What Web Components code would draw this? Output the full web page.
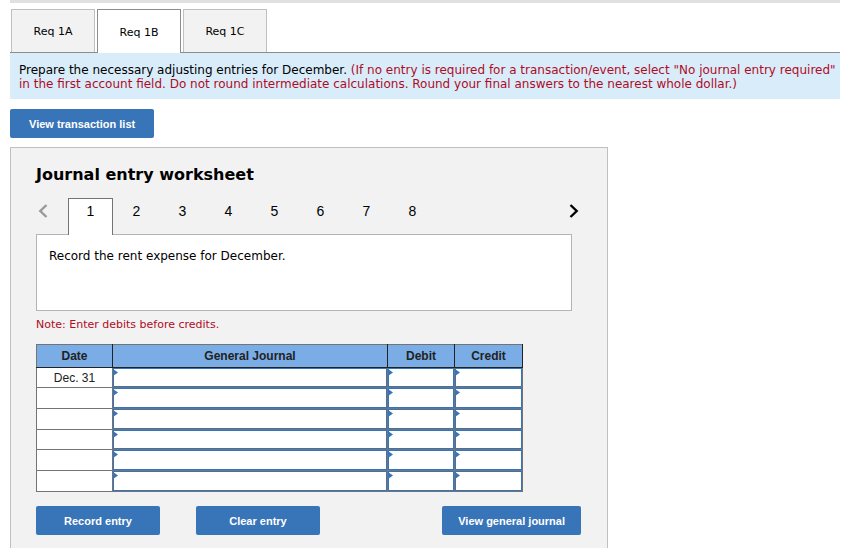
<!DOCTYPE html>
<html lang="en">
<head>
<meta charset="utf-8">
<meta name="viewport" content="width=device-width, initial-scale=1">
<title>Journal entry worksheet</title>
<style>
  :root {
    --blue: #3874b8;
    --note: #b00b25;
    --panel: #f2f2f2;
    --line: #c0c0c0;
    --line-dark: #8c8c8c;
    --grid: #747474;
    --sans: "Liberation Sans", Arial, sans-serif;
  }

  body {
    margin: 0;
    padding: 0 9px 0 10px;
    background: #fff;
    color: #000;
    font: 12px/14px "DejaVu Sans", Verdana, sans-serif;
  }

  em {
    font-style: normal;
    color: var(--note);
  }
</style>
</head>
<body>
<req-tabs>
  <req-tab>Req 1A</req-tab>
  <req-tab selected>Req 1B</req-tab>
  <req-tab>Req 1C</req-tab>
</req-tabs>
<instruction-bar>Prepare the necessary adjusting entries for December. <em>(If no entry is required for a transaction/event, select "No journal entry required"</em> <em>in the first account field. Do not round intermediate calculations. Round your final answers to the nearest whole dollar.)</em></instruction-bar>
<action-button>View transaction list</action-button>
<journal-worksheet heading="Journal entry worksheet">
  <entry-pager slot="pager" pages="8" current="1"></entry-pager>
  <span slot="task">Record the rent expense for December.</span>
  <span slot="note">Note: Enter debits before credits.</span>
  <ledger-table slot="ledger" date="Dec. 31" rows="6"></ledger-table>
  <action-button slot="actions" size="medium">Record entry</action-button>
  <action-button slot="actions" size="medium">Clear entry</action-button>
  <action-button slot="actions" align="end">View general journal</action-button>
</journal-worksheet>

<script>
/** Strip holding the requirement tabs. */
class ReqTabs extends HTMLElement {
  constructor() {
    super();
    this.attachShadow({ mode: "open" }).innerHTML = `
      <style>
        :host {
          display: block;
          border-top: 3px solid #e0e0e0;
          padding-top: 6px;
        }
        div {
          display: flex;
          gap: 2px;
          padding-left: 1px;
          border-bottom: 1px solid var(--line-dark);
        }
      </style>
      <div role="tablist"><slot></slot></div>
    `;
  }
}

/** @attr {boolean} selected - The open tab, which covers the strip's line */
class ReqTab extends HTMLElement {
  constructor() {
    super();
    this.attachShadow({ mode: "open" }).innerHTML = `
      <style>
        :host {
          display: block;
        }
        button {
          display: block;
          width: 84px;
          height: 43px;
          padding: 2px 0 0;
          border: 1px solid var(--line);
          border-bottom: 0;
          background: var(--panel);
          color: inherit;
          font: inherit;
          font-size: 11px;
          cursor: pointer;
        }
        :host([selected]) {
          margin-bottom: -1px;
        }
        :host([selected]) button {
          height: 44px;
          border-color: var(--line-dark);
          background: #fff;
        }
      </style>
      <button type="button" role="tab" aria-selected="${this.hasAttribute("selected")}"><slot></slot></button>
    `;
  }
}

class InstructionBar extends HTMLElement {
  constructor() {
    super();
    this.attachShadow({ mode: "open" }).innerHTML = `
      <style>
        :host {
          display: block;
          margin-bottom: 10px;
          padding: 10px 0 8px 9px;
          background: #d9ecfa;
        }
      </style>
      <slot></slot>
    `;
  }
}

/**
 * Blue button.
 *
 * @attr {string} size - "medium" gives the fixed-width variant
 * @attr {string} align - "end" pushes the button to the end of its row
 */
class ActionButton extends HTMLElement {
  constructor() {
    super();
    this.attachShadow({ mode: "open" }).innerHTML = `
      <style>
        :host {
          display: flex;
        }
        :host([align="end"]) {
          margin-left: auto;
        }
        button {
          height: 29px;
          padding: 0 19px;
          border: 0;
          border-radius: 2px;
          background: var(--blue);
          color: #fff;
          font: bold 11px/14px var(--sans);
          white-space: nowrap;
          cursor: pointer;
        }
        :host([size="medium"]) button {
          width: 124px;
        }
        :host([align="end"]) button {
          padding: 0 16px;
        }
      </style>
      <button type="button"><slot></slot></button>
    `;
  }
}

class JournalWorksheet extends HTMLElement {
  constructor() {
    super();
    this.attachShadow({ mode: "open" }).innerHTML = `
      <style>
        :host {
          display: block;
          box-sizing: border-box;
          max-width: 598px;
          margin: 9px 0 5px;
          padding: 17px 26px 13px 25px;
          border: 1px solid var(--line);
          border-bottom: 0;
          background: var(--panel);
        }
        h2 {
          margin: 0 0 13px;
          font-size: 16px;
          line-height: 20px;
        }
        .entry {
          margin-right: 9px;
        }
        .task {
          box-sizing: border-box;
          min-height: 77px;
          padding: 14px 12px;
          border: 1px solid #b4b4b4;
          background: #fff;
        }
        .note {
          margin: 7px 0 12px;
          color: var(--note);
          font-size: 11px;
        }
        .actions {
          display: flex;
          gap: 36px;
          margin-top: 14px;
        }
      </style>
      <h2>${this.getAttribute("heading")}</h2>
      <div class="entry">
        <slot name="pager"></slot>
        <div class="task"><slot name="task"></slot></div>
      </div>
      <p class="note"><slot name="note"></slot></p>
      <slot name="ledger"></slot>
      <div class="actions"><slot name="actions"></slot></div>
    `;
  }
}

/** Numbered entry tabs between a previous and a next arrow. */
class EntryPager extends HTMLElement {
  constructor() {
    super();
    const current = Number(this.getAttribute("current"));
    const pages = Array.from({ length: Number(this.getAttribute("pages")) }, (_, i) => i + 1);
    this.attachShadow({ mode: "open" }).innerHTML = `
      <style>
        :host {
          display: flex;
          justify-content: space-between;
        }
        .start, .pages {
          display: flex;
        }
        .pages {
          gap: 1px;
          margin-bottom: -1px;
        }
        button {
          box-sizing: border-box;
          padding: 0;
          border: 0;
          background: none;
          color: inherit;
          cursor: pointer;
        }
        .pages button {
          width: 45px;
          height: 37px;
          padding-bottom: 12px;
          border: 1px solid transparent;
          border-bottom: 0;
          font: 14px/16px var(--sans);
        }
        .pages [aria-selected="true"] {
          z-index: 1;
          border-color: var(--grid);
          background: #fff;
        }
        .arrow {
          width: 14px;
          height: 26px;
        }
        .start .arrow {
          margin-right: 18px;
        }
        .arrow:disabled {
          color: #999;
        }
        svg {
          display: block;
          margin: auto;
          fill: none;
          stroke: currentColor;
          stroke-width: 2.4;
        }
        .end {
          margin-right: -9px;
        }
      </style>
      <div class="start">
        <button class="arrow" type="button" aria-label="Previous" disabled>
          <svg width="10" height="14" viewBox="0 0 10 14"><path d="M8.5 1 2.3 7l6.2 6"/></svg>
        </button>
        <div class="pages" role="tablist">
          ${pages.map((n) => `<button type="button" role="tab" aria-selected="${n === current}">${n}</button>`).join("")}
        </div>
      </div>
      <button class="arrow end" type="button" aria-label="Next">
        <svg width="10" height="14" viewBox="0 0 10 14"><path d="M1.5 1 7.7 7l-6.2 6"/></svg>
      </button>
    `;
  }
}

/** Editable cell with a marker in its corner. */
class LedgerCell extends HTMLElement {
  constructor() {
    super();
    this.attachShadow({ mode: "open" });
  }

  connectedCallback() {
    this.shadowRoot.innerHTML = `
      <style>
        :host {
          display: block;
          position: relative;
        }
        input {
          display: block;
          box-sizing: border-box;
          width: 100%;
          height: var(--cell-height, 20px);
          margin: 0;
          padding: 0 6px;
          border: 1px solid var(--blue);
          border-radius: 0;
          background: #fff;
          font: 12px/14px var(--sans);
        }
        :host::after {
          content: "";
          position: absolute;
          top: 1px;
          left: 0;
          width: 5px;
          height: 7px;
          background: var(--blue);
          clip-path: polygon(0 0, 100% 50%, 0 100%);
        }
      </style>
      <input type="text" aria-label="${this.getAttribute("label")}">
    `;
  }
}

class LedgerTable extends HTMLElement {
  constructor() {
    super();
    const columns = ["General Journal", "Debit", "Credit"];
    const rows = Array.from({ length: Number(this.getAttribute("rows")) }, (_, i) => `
      <tr>
        <td>${i === 0 ? this.getAttribute("date") : ""}</td>
        ${columns.map((c) => `<td><ledger-cell label="${c}, row ${i + 1}"></ledger-cell></td>`).join("")}
      </tr>`);
    this.attachShadow({ mode: "open" }).innerHTML = `
      <style>
        :host {
          display: block;
          max-width: 487px;
        }
        table {
          width: 100%;
          table-layout: fixed;
          border-collapse: collapse;
          background: #fff;
          color: #222;
          font: 12px/14px var(--sans);
          text-align: center;
        }
        .date { width: 76px; }
        .debit { width: 67px; }
        .credit { width: 68px; }
        th {
          height: 22px;
          padding: 0;
          border: 1px solid #222;
          border-top-color: var(--grid);
          background: #7aade6;
        }
        th:first-child {
          border-left-color: var(--grid);
        }
        td {
          padding: 0;
          border: 1px solid var(--grid);
        }
        tbody tr:nth-child(3n + 1) {
          --cell-height: 19px;
        }
      </style>
      <table>
        <colgroup><col class="date"><col><col class="debit"><col class="credit"></colgroup>
        <thead>
          <tr><th scope="col">Date</th>${columns.map((c) => `<th scope="col">${c}</th>`).join("")}</tr>
        </thead>
        <tbody>${rows.join("")}</tbody>
      </table>
    `;
  }
}

customElements.define("req-tabs", ReqTabs);
customElements.define("req-tab", ReqTab);
customElements.define("instruction-bar", InstructionBar);
customElements.define("action-button", ActionButton);
customElements.define("journal-worksheet", JournalWorksheet);
customElements.define("entry-pager", EntryPager);
customElements.define("ledger-cell", LedgerCell);
customElements.define("ledger-table", LedgerTable);
</script>
</body>
</html>
